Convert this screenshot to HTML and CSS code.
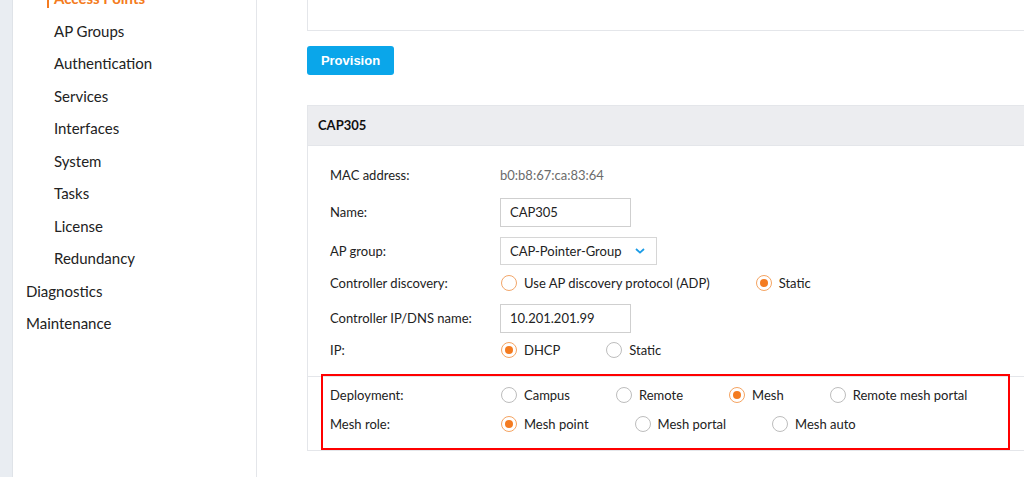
FILE: index.html
```html
<!DOCTYPE html>
<html>
<head>
<meta charset="utf-8">
<link rel="stylesheet" href="styles.css">
</head>
<body>
<div class="rail"></div>
<nav class="sidebar">
  <ul class="menu">
    <li class="item sub active">Access Points</li>
    <li class="item sub">AP Groups</li>
    <li class="item sub">Authentication</li>
    <li class="item sub">Services</li>
    <li class="item sub">Interfaces</li>
    <li class="item sub">System</li>
    <li class="item sub">Tasks</li>
    <li class="item sub">License</li>
    <li class="item sub">Redundancy</li>
    <li class="item">Diagnostics</li>
    <li class="item">Maintenance</li>
  </ul>
</nav>
<main class="main">
  <div class="card top-card"></div>
  <button class="btn-primary">Provision</button>
  <section class="card ap-card">
    <header class="card-head">CAP305</header>
    <div class="card-body">
      <div class="row r-mac">
        <div class="label">MAC address:</div>
        <div class="value muted">b0:b8:67:ca:83:64</div>
      </div>
      <div class="row r-name">
        <div class="label">Name:</div>
        <div class="value"><div class="input">CAP305</div></div>
      </div>
      <div class="row r-group">
        <div class="label">AP group:</div>
        <div class="value">
          <div class="select">CAP-Pointer-Group
            <svg class="chev" width="10" height="6" viewBox="0 0 10 6"><path d="M1 1 L5 4.6 L9 1" fill="none" stroke="#1a9be6" stroke-width="1.8"/></svg>
          </div>
        </div>
      </div>
      <div class="row r-disc">
        <div class="label">Controller discovery:</div>
        <div class="value radios">
          <span class="opt"><span class="radio focus"></span>Use AP discovery protocol (ADP)</span>
          <span class="opt"><span class="radio on"></span>Static</span>
        </div>
      </div>
      <div class="row r-ip-name">
        <div class="label">Controller IP/DNS name:</div>
        <div class="value"><div class="input">10.201.201.99</div></div>
      </div>
      <div class="row r-ip">
        <div class="label">IP:</div>
        <div class="value radios">
          <span class="opt"><span class="radio on"></span>DHCP</span>
          <span class="opt"><span class="radio"></span>Static</span>
        </div>
      </div>
    </div>
    <div class="card-body mesh">
      <div class="row r-dep">
        <div class="label">Deployment:</div>
        <div class="value radios">
          <span class="opt"><span class="radio"></span>Campus</span>
          <span class="opt"><span class="radio"></span>Remote</span>
          <span class="opt"><span class="radio on"></span>Mesh</span>
          <span class="opt"><span class="radio"></span>Remote mesh portal</span>
        </div>
      </div>
      <div class="row r-role">
        <div class="label">Mesh role:</div>
        <div class="value radios">
          <span class="opt"><span class="radio on"></span>Mesh point</span>
          <span class="opt"><span class="radio"></span>Mesh portal</span>
          <span class="opt"><span class="radio"></span>Mesh auto</span>
        </div>
      </div>
    </div>
  </section>
</main>
</body>
</html>
```

FILE: styles.css
```css
* { box-sizing: border-box; }
html, body { margin: 0; padding: 0; }
body {
  display: flex;
  width: 1024px;
  height: 477px;
  overflow: hidden;
  background: #fff;
  font-family: Lato, "Open Sans", sans-serif;
  color: #222;
}
.rail {
  width: 13px;
  flex: none;
  background: #e9edf2;
  border-right: 1px solid #dfe3e8;
}
.sidebar {
  width: 244px;
  flex: none;
  border-right: 1px solid #e4e6ea;
}
.menu {
  list-style: none;
  margin: -17.75px 0 0 0;
  padding: 0;
}
.item {
  height: 32.5px;
  line-height: 32.5px;
  font-size: 15px;
  padding-left: 13px;
  color: #222;
  white-space: nowrap;
}
.item.sub { padding-left: 41px; }
.item.active {
  color: #f47b20;
  font-weight: 700;
  position: relative;
}
.item.active::before {
  content: "";
  position: absolute;
  left: 34px;
  top: 8px;
  width: 2px;
  height: 18px;
  background: #f47b20;
}
.main {
  flex: 1;
  min-width: 0;
  padding-left: 50px;
  overflow: hidden;
}
.card {
  width: 760px;
  border: 1px solid #e4e6ea;
  background: #fff;
}
.top-card {
  height: 41px;
  margin-top: -10px;
}
.btn-primary {
  display: block;
  margin-top: 15px;
  width: 87px;
  height: 29px;
  border: none;
  border-radius: 3px;
  background: #0aa6ea;
  color: #fff;
  font-family: "Liberation Sans", Arial, sans-serif;
  font-weight: 700;
  font-size: 13px;
  padding: 0;
}
.ap-card {
  margin-top: 30px;
}
.card-head {
  height: 40px;
  background: #ecedf0;
  border-bottom: 1px solid #e4e6ea;
  padding-left: 10px;
  line-height: 39px;
  font-size: 13px;
  font-weight: 700;
  color: #111;
}
.card-body {
  padding: 14px 0 11px 22px;
  font-size: 13px;
}
.card-body.mesh {
  border-top: 1px solid #e4e6ea;
  padding-top: 3px;
  padding-bottom: 12px;
  position: relative;
}
.card-body.mesh::after {
  content: "";
  position: absolute;
  left: 13px;
  top: -3px;
  width: 685px;
  height: 72px;
  border: 2px solid #f00;
  pointer-events: none;
}
.row {
  display: flex;
  align-items: center;
  height: 30px;
}
.r-name { margin-top: 7px; }
.r-group { margin-top: 9px; }
.r-disc { margin-top: 2px; }
.r-ip-name { margin-top: 5px; }
.r-ip { margin-top: 2px; }
.r-dep, .r-role { height: 29px; }
.label {
  width: 170px;
  flex: none;
  white-space: nowrap;
}
.value { white-space: nowrap; }
.muted { color: #6b6b6b; }
.input {
  width: 131px;
  height: 29px;
  border: 1px solid #cfcfcf;
  padding-left: 9px;
  line-height: 27px;
}
.select {
  width: 157px;
  height: 28px;
  border: 1px solid #d6d6d6;
  padding-left: 9px;
  line-height: 26px;
  position: relative;
}
.chev {
  position: absolute;
  right: 11px;
  top: 10px;
}
.radios {
  display: flex;
  align-items: center;
  gap: 45px;
}
.opt {
  display: inline-flex;
  align-items: center;
  gap: 7px;
}
.radio {
  width: 16px;
  height: 16px;
  border-radius: 50%;
  border: 1px solid #bdbdbd;
  background: #fff;
  margin-left: 1px;
  position: relative;
  flex: none;
}
.radio.focus { border-color: #f2a66a; }
.radio.on { border-color: #f5a462; }
.radio.on::after {
  content: "";
  position: absolute;
  left: 3px;
  top: 3px;
  width: 8px;
  height: 8px;
  border-radius: 50%;
  background: #f47b20;
}
```
